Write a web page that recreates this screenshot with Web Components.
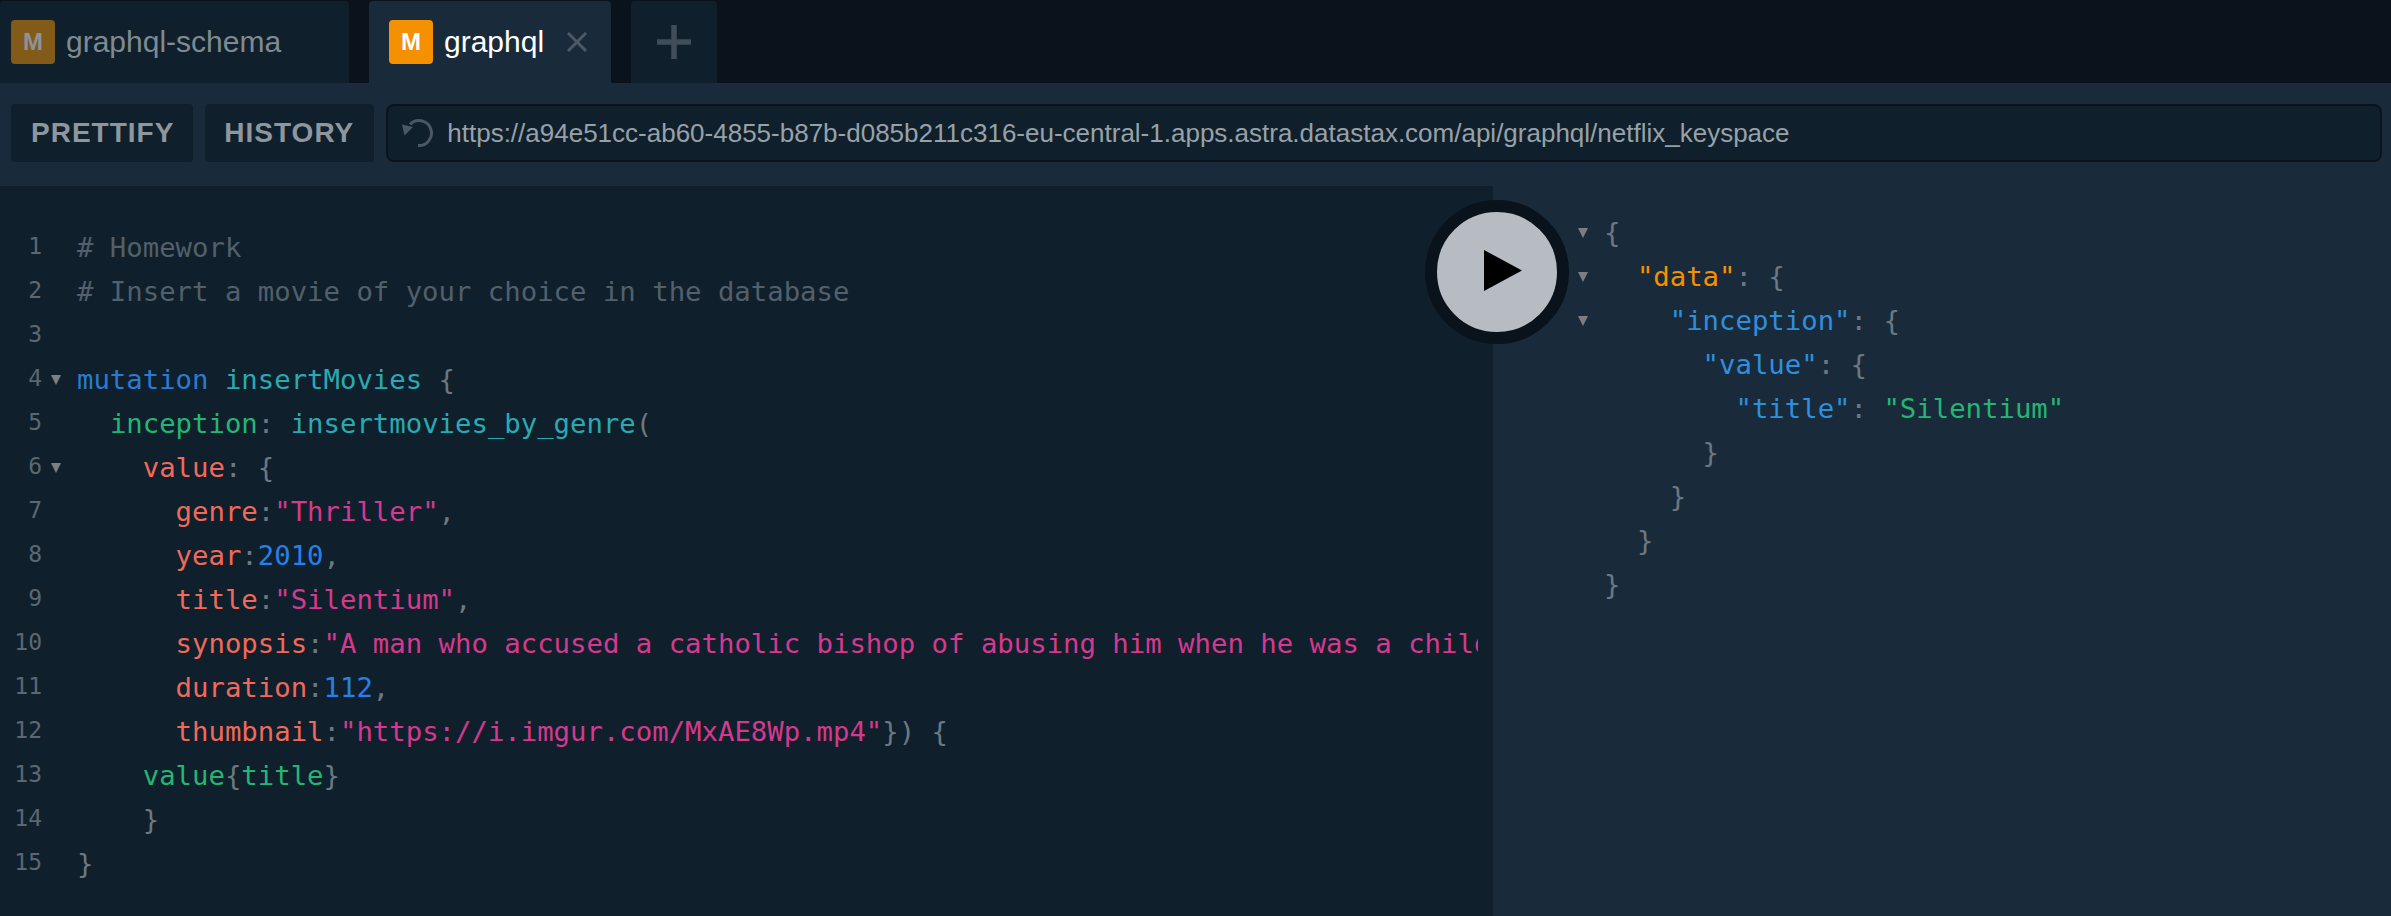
<!DOCTYPE html>
<html>
<head>
<meta charset="utf-8">
<title>graphql</title>
<style>
  html, body { margin: 0; height: 100%; background: #0a131b; }
  .cm { color: #535f6a; }
  .kw { color: #2b7ad1; }
  .df { color: #2ba9b3; }
  .al { color: #25b573; }
  .at { color: #f1695a; }
  .st { color: #d5398d; }
  .nu { color: #2680ea; }
  .pu { color: #6d7881; }
  .ke { color: #2f8fdc; }
  .or { color: #f59000; }
</style>
</head>
<body>
<gql-app>
  <gql-tabs slot="tabs">
    <gql-tab label="graphql-schema"></gql-tab>
    <gql-tab label="graphql" active></gql-tab>
    <gql-add-tab></gql-add-tab>
  </gql-tabs>
  <gql-toolbar slot="toolbar">
    <gql-button>PRETTIFY</gql-button>
    <gql-button style="padding-left: 19px; padding-right: 20px">HISTORY</gql-button>
    <gql-url>https://a94e51cc-ab60-4855-b87b-d085b211c316-eu-central-1.apps.astra.datastax.com/api/graphql/netflix_keyspace</gql-url>
  </gql-toolbar>
  <gql-editor slot="editor">
    <code-line num="1"><span class="cm"># Homework</span></code-line>
    <code-line num="2"><span class="cm"># Insert a movie of your choice in the database</span></code-line>
    <code-line num="3"></code-line>
    <code-line num="4" fold><span class="kw">mutation</span> <span class="df">insertMovies</span> <span class="pu">{</span></code-line>
    <code-line num="5">  <span class="al">inception</span><span class="pu">:</span> <span class="df">insertmovies_by_genre</span><span class="pu">(</span></code-line>
    <code-line num="6" fold>    <span class="at">value</span><span class="pu">: {</span></code-line>
    <code-line num="7">      <span class="at">genre</span><span class="pu">:</span><span class="st">"Thriller"</span><span class="pu">,</span></code-line>
    <code-line num="8">      <span class="at">year</span><span class="pu">:</span><span class="nu">2010</span><span class="pu">,</span></code-line>
    <code-line num="9">      <span class="at">title</span><span class="pu">:</span><span class="st">"Silentium"</span><span class="pu">,</span></code-line>
    <code-line num="10">      <span class="at">synopsis</span><span class="pu">:</span><span class="st">"A man who accused a catholic bishop of abusing him when he was a child</span></code-line>
    <code-line num="11">      <span class="at">duration</span><span class="pu">:</span><span class="nu">112</span><span class="pu">,</span></code-line>
    <code-line num="12">      <span class="at">thumbnail</span><span class="pu">:</span><span class="st">"https://i.imgur.com/MxAE8Wp.mp4"</span><span class="pu">}) {</span></code-line>
    <code-line num="13">    <span class="al">value</span><span class="pu">{</span><span class="al">title</span><span class="pu">}</span></code-line>
    <code-line num="14">    <span class="pu">}</span></code-line>
    <code-line num="15"><span class="pu">}</span></code-line>
  </gql-editor>
  <run-button slot="run"></run-button>
  <gql-result slot="result">
    <result-line fold><span class="pu">{</span></result-line>
    <result-line fold>  <span class="or">"data"</span><span class="pu">: {</span></result-line>
    <result-line fold>    <span class="ke">"inception"</span><span class="pu">: {</span></result-line>
    <result-line>      <span class="ke">"value"</span><span class="pu">: {</span></result-line>
    <result-line>        <span class="ke">"title"</span><span class="pu">:</span> <span class="al">"Silentium"</span></result-line>
    <result-line>      <span class="pu">}</span></result-line>
    <result-line>    <span class="pu">}</span></result-line>
    <result-line>  <span class="pu">}</span></result-line>
    <result-line><span class="pu">}</span></result-line>
  </gql-result>
</gql-app>

<script>
const MONO = '"DejaVu Sans Mono", "Liberation Mono", monospace'
const SANS = '"Liberation Sans", Arial, sans-serif'

// little helper so each class stays short
class Base extends HTMLElement {
  constructor () {
    super()
    this.shadow = this.attachShadow({ mode: 'open' })
  }
}

class GqlApp extends Base {
  connectedCallback () {
    this.shadow.innerHTML = `
    <style>
      :host { display: flex; flex-direction: column; height: 100vh; overflow: hidden; }
      .panes { flex: 1; display: flex; position: relative; min-height: 0; }
      .run { position: absolute; left: 1425px; top: 14px; }
    </style>
    <slot name="tabs"></slot>
    <slot name="toolbar"></slot>
    <div class="panes">
      <slot name="editor"></slot>
      <slot name="result"></slot>
      <div class="run"><slot name="run"></slot></div>
    </div>`
  }
}

class GqlTabs extends Base {
  connectedCallback () {
    this.shadow.innerHTML = `
    <style>
      :host { display: flex; gap: 20px; height: 82px; padding-top: 1px; background: #0a131b; flex: none; }
    </style>
    <slot></slot>`
  }
}

class GqlTab extends Base {
  connectedCallback () {
    const active = this.hasAttribute('active')
    this.shadow.innerHTML = `
    <style>
      :host {
        display: flex; align-items: center; box-sizing: border-box;
        width: ${active ? 242 : 349}px;
        padding-left: ${active ? 20 : 11}px;
        background: ${active ? '#192b3b' : '#0f202c'};
        border-radius: 4px 4px 0 0;
        font: 30px ${SANS};
        color: ${active ? '#fff' : '#7f8a92'};
      }
      .badge {
        width: 44px; height: 44px; border-radius: 4px; flex: none;
        display: flex; align-items: center; justify-content: center;
        font: bold 24px ${SANS};
        background: ${active ? '#f59000' : '#835b19'};
        color: ${active ? '#fff' : '#8e9399'};
      }
      .label { margin-left: 11px; }
      svg { margin-left: 23px; }
    </style>
    <span class="badge">M</span>
    <span class="label">${this.getAttribute('label')}</span>
    ${active ? '<svg width="20" height="20" viewBox="0 0 20 20"><path d="M1 1L19 19M19 1L1 19" stroke="#4c5863" stroke-width="3" fill="none"/></svg>' : ''}`
  }
}

class GqlAddTab extends Base {
  connectedCallback () {
    this.shadow.innerHTML = `
    <style>
      :host {
        display: flex; align-items: center; justify-content: center;
        width: 86px; background: #0f202c; border-radius: 4px 4px 0 0;
      }
    </style>
    <svg width="34" height="34" viewBox="0 0 34 34"><path d="M0 17H34M17 0V34" stroke="#414d58" stroke-width="5.5" fill="none"/></svg>`
  }
}

class GqlToolbar extends Base {
  connectedCallback () {
    this.shadow.innerHTML = `
    <style>
      :host {
        display: flex; gap: 12px; flex: none; box-sizing: border-box;
        height: 103px; padding: 21px 9px 24px 11px; background: #192b3b;
      }
    </style>
    <slot></slot>`
  }
}

class GqlButton extends Base {
  connectedCallback () {
    this.shadow.innerHTML = `
    <style>
      :host {
        display: flex; align-items: center; padding: 0 19px 0 20px; flex: none;
        background: #0f202c; border-radius: 4px; color: #8f979e;
        font: bold 28px ${SANS}; letter-spacing: 1px;
      }
    </style>
    <slot></slot>`
  }
}

class GqlUrl extends Base {
  connectedCallback () {
    this.shadow.innerHTML = `
    <style>
      :host {
        flex: 1; display: flex; align-items: center; box-sizing: border-box;
        background: #0f202c; border: 2px solid #0a131b; border-radius: 8px;
        padding-left: 14px; color: #98a1a8; font: 26px ${SANS};
      }
      svg { margin-right: 15px; flex: none; overflow: visible; }
    </style>
    <svg width="30" height="28" viewBox="0 0 30 28" fill="none" stroke="#4b5863" stroke-width="3">
      <path d="M8 5.3A12.5 12.5 0 1 1 16 26.5"/>
      <path d="M0 5.5L11 8L2.5 16.5Z" fill="#4b5863" stroke="none"/>
    </svg>
    <slot></slot>`
  }
}

class GqlEditor extends Base {
  connectedCallback () {
    this.shadow.innerHTML = `
    <style>
      :host {
        display: block; box-sizing: border-box; width: 1493px; flex: none; height: 100%;
        background: #0f202c; padding-top: 40px; overflow: hidden;
        font: 27.3px/44px ${MONO};
      }
    </style>
    <slot></slot>`
  }
}

class CodeLine extends Base {
  connectedCallback () {
    this.shadow.innerHTML = `
    <style>
      :host { display: flex; height: 44px; width: 1478px; overflow: hidden; }
      .num { width: 42px; flex: none; text-align: right; color: #5b6772; font-size: 23px; line-height: 40px; }
      .fold { width: 35px; flex: none; display: flex; align-items: center; padding-left: 9px; box-sizing: border-box; }
      .code { white-space: pre; }
    </style>
    <span class="num">${this.getAttribute('num')}</span>
    <span class="fold">${this.hasAttribute('fold') ? '<svg width="10" height="10" viewBox="0 0 10 10"><path d="M0 0H10L5 10Z" fill="#7c7f82"/></svg>' : ''}</span>
    <span class="code"><slot></slot></span>`
  }
}

class GqlResult extends Base {
  connectedCallback () {
    this.shadow.innerHTML = `
    <style>
      :host {
        display: block; flex: 1; box-sizing: border-box; height: 100%;
        background: #192b3b; padding: 25px 0 0 85px;
        font: 27.3px/44px ${MONO};
      }
    </style>
    <slot></slot>`
  }
}

class ResultLine extends Base {
  connectedCallback () {
    this.shadow.innerHTML = `
    <style>
      :host { display: flex; height: 44px; }
      .fold { width: 26px; flex: none; display: flex; align-items: center; }
      .code { white-space: pre; }
    </style>
    <span class="fold">${this.hasAttribute('fold') ? '<svg width="10" height="10" viewBox="0 0 10 10"><path d="M0 0H10L5 10Z" fill="#7c7f82"/></svg>' : ''}</span>
    <span class="code"><slot></slot></span>`
  }
}

class RunButton extends Base {
  connectedCallback () {
    this.shadow.innerHTML = `
    <style>
      :host {
        display: flex; align-items: center; justify-content: center; box-sizing: border-box;
        width: 144px; height: 144px; border-radius: 50%;
        background: #b7bbc2; border: 12px solid #0a131b;
      }
      svg { margin: -3px 0 0 11px; }
    </style>
    <svg width="38" height="41" viewBox="0 0 38 41"><path d="M0 0L38 20.5L0 41Z" fill="#000"/></svg>`
  }
}

customElements.define('gql-app', GqlApp)
customElements.define('gql-tabs', GqlTabs)
customElements.define('gql-tab', GqlTab)
customElements.define('gql-add-tab', GqlAddTab)
customElements.define('gql-toolbar', GqlToolbar)
customElements.define('gql-button', GqlButton)
customElements.define('gql-url', GqlUrl)
customElements.define('gql-editor', GqlEditor)
customElements.define('code-line', CodeLine)
customElements.define('gql-result', GqlResult)
customElements.define('result-line', ResultLine)
customElements.define('run-button', RunButton)
</script>
</body>
</html>
